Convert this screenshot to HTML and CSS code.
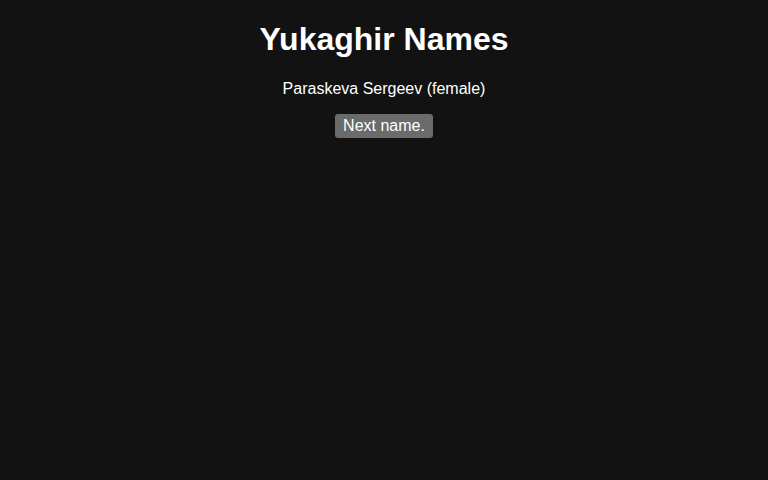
FILE: index.html
```html
<!DOCTYPE html>
<html lang="en">

<head>
    <meta charset="UTF-8">
    <meta name="viewport" content="width=device-width, initial-scale=1.0">
    <title>Yukaghir Names</title>
    <link rel="stylesheet" href="styles.css">
</head>

<body>
    <div class="container">
        <h1>Yukaghir Names</h1>
        <p class="name" id="name">Paraskeva Sergeev (female)</p>
        <button class="next" id="next">Next name.</button>
    </div>
</body>

</html>
```

FILE: styles.css
```css
body {
    margin: 0 8px;
    background-color: #121212;
    color: #ffffff;
    font-family: 'Liberation Sans', Arial, sans-serif;
}

.container {
    display: flex;
    flex-direction: column;
    align-items: center;
    text-align: center;
}

h1 {
    font-size: 32px;
    margin: 21px 0 22px;
}

.name {
    font-size: 16px;
    margin: 0 0 16px;
}

.next {
    font-family: 'Liberation Sans', Arial, sans-serif;
    font-size: 16px;
    color: #ffffff;
    background-color: #6b6b6b;
    border: none;
    border-radius: 3px;
    padding: 3px 8px;
}
```
